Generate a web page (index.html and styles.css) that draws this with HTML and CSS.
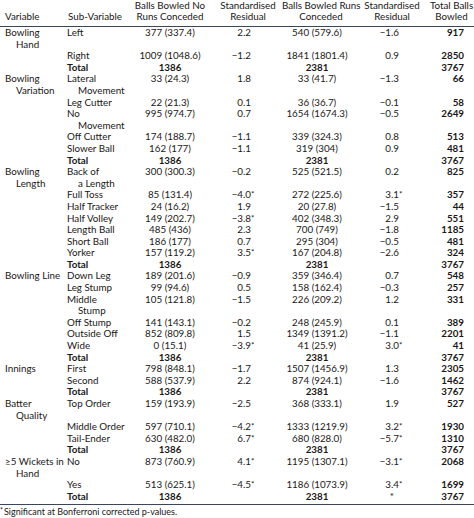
FILE: index.html
```html
<!DOCTYPE html>
<html>
<head>
<meta charset="utf-8">
<link rel="stylesheet" href="styles.css">
</head>
<body>
<table class="tbl">
<colgroup>
<col class="c1"><col class="c2"><col class="c3"><col class="c4"><col class="c5"><col class="c6"><col class="c7">
</colgroup>
<thead>
<tr>
<th class="h-var">Variable</th>
<th class="h-sub">Sub-Variable</th>
<th class="h-c">Balls Bowled No<br>Runs Conceded</th>
<th class="h-c">Standardised<br>Residual</th>
<th class="h-c">Balls Bowled Runs<br>Conceded</th>
<th class="h-c">Standardised<br>Residual</th>
<th class="h-tot">Total Balls<br>Bowled</th>
</tr>
</thead>
<tbody>
<tr><td class="var"><div>Bowling</div><div class="ind">Hand</div></td><td class="sub">Left</td><td class="obs">377 (337.4)</td><td class="r1">2.2</td><td class="obs2">540 (579.6)</td><td class="r2">−1.6</td><td class="tot">917</td></tr>
<tr><td class="var"></td><td class="sub">Right</td><td class="obs">1009 (1048.6)</td><td class="r1">−1.2</td><td class="obs2">1841 (1801.4)</td><td class="r2">0.9</td><td class="tot">2850</td></tr>
<tr><td class="var"></td><td class="sub b">Total</td><td class="obs b">1386</td><td class="r1"></td><td class="obs2 b">2381</td><td class="r2"></td><td class="tot">3767</td></tr>

<tr><td class="var"><div>Bowling</div><div class="ind">Variation</div></td><td class="sub"><div>Lateral</div><div class="ind">Movement</div></td><td class="obs">33 (24.3)</td><td class="r1">1.8</td><td class="obs2">33 (41.7)</td><td class="r2">−1.3</td><td class="tot">66</td></tr>
<tr><td class="var"></td><td class="sub">Leg Cutter</td><td class="obs">22 (21.3)</td><td class="r1">0.1</td><td class="obs2">36 (36.7)</td><td class="r2">−0.1</td><td class="tot">58</td></tr>
<tr><td class="var"></td><td class="sub"><div>No</div><div class="ind">Movement</div></td><td class="obs">995 (974.7)</td><td class="r1">0.7</td><td class="obs2">1654 (1674.3)</td><td class="r2">−0.5</td><td class="tot">2649</td></tr>
<tr><td class="var"></td><td class="sub">Off Cutter</td><td class="obs">174 (188.7)</td><td class="r1">−1.1</td><td class="obs2">339 (324.3)</td><td class="r2">0.8</td><td class="tot">513</td></tr>
<tr><td class="var"></td><td class="sub">Slower Ball</td><td class="obs">162 (177)</td><td class="r1">−1.1</td><td class="obs2">319 (304)</td><td class="r2">0.9</td><td class="tot">481</td></tr>
<tr><td class="var"></td><td class="sub b">Total</td><td class="obs b">1386</td><td class="r1"></td><td class="obs2 b">2381</td><td class="r2"></td><td class="tot">3767</td></tr>

<tr><td class="var"><div>Bowling</div><div class="ind">Length</div></td><td class="sub"><div>Back of</div><div class="ind">a Length</div></td><td class="obs">300 (300.3)</td><td class="r1">−0.2</td><td class="obs2">525 (521.5)</td><td class="r2">0.2</td><td class="tot">825</td></tr>
<tr><td class="var"></td><td class="sub">Full Toss</td><td class="obs">85 (131.4)</td><td class="r1">−4.0<span class="ast">*</span></td><td class="obs2">272 (225.6)</td><td class="r2">3.1<span class="ast">*</span></td><td class="tot">357</td></tr>
<tr><td class="var"></td><td class="sub">Half Tracker</td><td class="obs">24 (16.2)</td><td class="r1">1.9</td><td class="obs2">20 (27.8)</td><td class="r2">−1.5</td><td class="tot">44</td></tr>
<tr><td class="var"></td><td class="sub">Half Volley</td><td class="obs">149 (202.7)</td><td class="r1">−3.8<span class="ast">*</span></td><td class="obs2">402 (348.3)</td><td class="r2">2.9</td><td class="tot">551</td></tr>
<tr><td class="var"></td><td class="sub">Length Ball</td><td class="obs">485 (436)</td><td class="r1">2.3</td><td class="obs2">700 (749)</td><td class="r2">−1.8</td><td class="tot">1185</td></tr>
<tr><td class="var"></td><td class="sub">Short Ball</td><td class="obs">186 (177)</td><td class="r1">0.7</td><td class="obs2">295 (304)</td><td class="r2">−0.5</td><td class="tot">481</td></tr>
<tr><td class="var"></td><td class="sub">Yorker</td><td class="obs">157 (119.2)</td><td class="r1">3.5<span class="ast">*</span></td><td class="obs2">167 (204.8)</td><td class="r2">−2.6</td><td class="tot">324</td></tr>
<tr><td class="var"></td><td class="sub b">Total</td><td class="obs b">1386</td><td class="r1"></td><td class="obs2 b">2381</td><td class="r2"></td><td class="tot">3767</td></tr>

<tr><td class="var">Bowling Line</td><td class="sub">Down Leg</td><td class="obs">189 (201.6)</td><td class="r1">−0.9</td><td class="obs2">359 (346.4)</td><td class="r2">0.7</td><td class="tot">548</td></tr>
<tr><td class="var"></td><td class="sub">Leg Stump</td><td class="obs">99 (94.6)</td><td class="r1">0.5</td><td class="obs2">158 (162.4)</td><td class="r2">−0.3</td><td class="tot">257</td></tr>
<tr><td class="var"></td><td class="sub"><div>Middle</div><div class="ind">Stump</div></td><td class="obs">105 (121.8)</td><td class="r1">−1.5</td><td class="obs2">226 (209.2)</td><td class="r2">1.2</td><td class="tot">331</td></tr>
<tr><td class="var"></td><td class="sub">Off Stump</td><td class="obs">141 (143.1)</td><td class="r1">−0.2</td><td class="obs2">248 (245.9)</td><td class="r2">0.1</td><td class="tot">389</td></tr>
<tr><td class="var"></td><td class="sub">Outside Off</td><td class="obs">852 (809.8)</td><td class="r1">1.5</td><td class="obs2">1349 (1391.2)</td><td class="r2">−1.1</td><td class="tot">2201</td></tr>
<tr><td class="var"></td><td class="sub">Wide</td><td class="obs">0 (15.1)</td><td class="r1">−3.9<span class="ast">*</span></td><td class="obs2">41 (25.9)</td><td class="r2">3.0<span class="ast">*</span></td><td class="tot">41</td></tr>
<tr><td class="var"></td><td class="sub b">Total</td><td class="obs b">1386</td><td class="r1"></td><td class="obs2 b">2381</td><td class="r2"></td><td class="tot">3767</td></tr>

<tr><td class="var">Innings</td><td class="sub">First</td><td class="obs">798 (848.1)</td><td class="r1">−1.7</td><td class="obs2">1507 (1456.9)</td><td class="r2">1.3</td><td class="tot">2305</td></tr>
<tr><td class="var"></td><td class="sub">Second</td><td class="obs">588 (537.9)</td><td class="r1">2.2</td><td class="obs2">874 (924.1)</td><td class="r2">−1.6</td><td class="tot">1462</td></tr>
<tr><td class="var"></td><td class="sub b">Total</td><td class="obs b">1386</td><td class="r1"></td><td class="obs2 b">2381</td><td class="r2"></td><td class="tot">3767</td></tr>

<tr><td class="var"><div>Batter</div><div class="ind">Quality</div></td><td class="sub">Top Order</td><td class="obs">159 (193.9)</td><td class="r1">−2.5</td><td class="obs2">368 (333.1)</td><td class="r2">1.9</td><td class="tot">527</td></tr>
<tr><td class="var"></td><td class="sub">Middle Order</td><td class="obs">597 (710.1)</td><td class="r1">−4.2<span class="ast">*</span></td><td class="obs2">1333 (1219.9)</td><td class="r2">3.2<span class="ast">*</span></td><td class="tot">1930</td></tr>
<tr><td class="var"></td><td class="sub">Tail-Ender</td><td class="obs">630 (482.0)</td><td class="r1">6.7<span class="ast">*</span></td><td class="obs2">680 (828.0)</td><td class="r2">−5.7<span class="ast">*</span></td><td class="tot">1310</td></tr>
<tr><td class="var"></td><td class="sub b">Total</td><td class="obs b">1386</td><td class="r1"></td><td class="obs2 b">2381</td><td class="r2"></td><td class="tot">3767</td></tr>

<tr><td class="var"><div>≥5 Wickets in</div><div class="ind">Hand</div></td><td class="sub">No</td><td class="obs">873 (760.9)</td><td class="r1">4.1<span class="ast">*</span></td><td class="obs2">1195 (1307.1)</td><td class="r2">−3.1<span class="ast">*</span></td><td class="tot">2068</td></tr>
<tr><td class="var"></td><td class="sub">Yes</td><td class="obs">513 (625.1)</td><td class="r1">−4.5<span class="ast">*</span></td><td class="obs2">1186 (1073.9)</td><td class="r2">3.4<span class="ast">*</span></td><td class="tot">1699</td></tr>
<tr class="last"><td class="var"></td><td class="sub b">Total</td><td class="obs b">1386</td><td class="r1"></td><td class="obs2 b">2381</td><td class="r2 lone">*</td><td class="tot">3767</td></tr>
</tbody>
</table>
<p class="note"><span class="note-ast">*</span>Significant at Bonferroni corrected p-values.</p>
</body>
</html>
```
FILE: styles.css
```css
html, body {
  margin: 0;
  padding: 0;
  background: #ffffff;
  overflow: hidden;
}
body {
  font-family: "Lato", "Liberation Sans", sans-serif;
  color: #1a1718;
  font-size: 9.8px;
}
.tbl {
  width: 474px;
  table-layout: fixed;
  border-collapse: collapse;
  border-spacing: 0;
}
.c1 { width: 66px; }
.c2 { width: 60px; }
.c3 { width: 88px; }
.c4 { width: 68px; }
.c5 { width: 78px; }
.c6 { width: 64px; }
.c7 { width: 50px; }

th {
  font-weight: normal;
  line-height: 11.2px;
  padding: 0 0 3.6px 0;
  vertical-align: bottom;
  border-bottom: 1px solid #3b4656;
  white-space: nowrap;
}
.h-var { text-align: left; padding-left: 5px; }
.h-sub { text-align: left; padding-left: 2px; }
.h-c { text-align: center; }
.h-tot { text-align: center; padding-left: 5px; }

td {
  padding: 0;
  line-height: 11.6px;
  vertical-align: top;
  white-space: nowrap;
}
.var { padding-left: 5px; }
.sub { padding-left: 1px; }
.ind { padding-left: 11px; }
.b { font-weight: bold; }
.obs { text-align: center; }
.obs2 { text-align: center; padding-right: 8px; }
.r1 { text-align: right; padding-right: 31px; }
.r2 { text-align: right; padding-right: 25px; }
.r2.lone { padding-right: 30px; }
.tot { text-align: right; padding-right: 10px; font-weight: bold; }
.ast {
  display: inline-block;
  width: 0;
  overflow: visible;
  font-size: 8px;
  vertical-align: top;
  line-height: 10px;
}
.last td { padding-bottom: 1.5px; border-bottom: 1px solid #3b4656; }
.note {
  margin: 0;
  padding: 1px 0 0 0;
  font-size: 9px;
  line-height: 11px;
}
.note-ast { font-size: 7px; vertical-align: top; line-height: 8px; margin-right: 1px; }
```
